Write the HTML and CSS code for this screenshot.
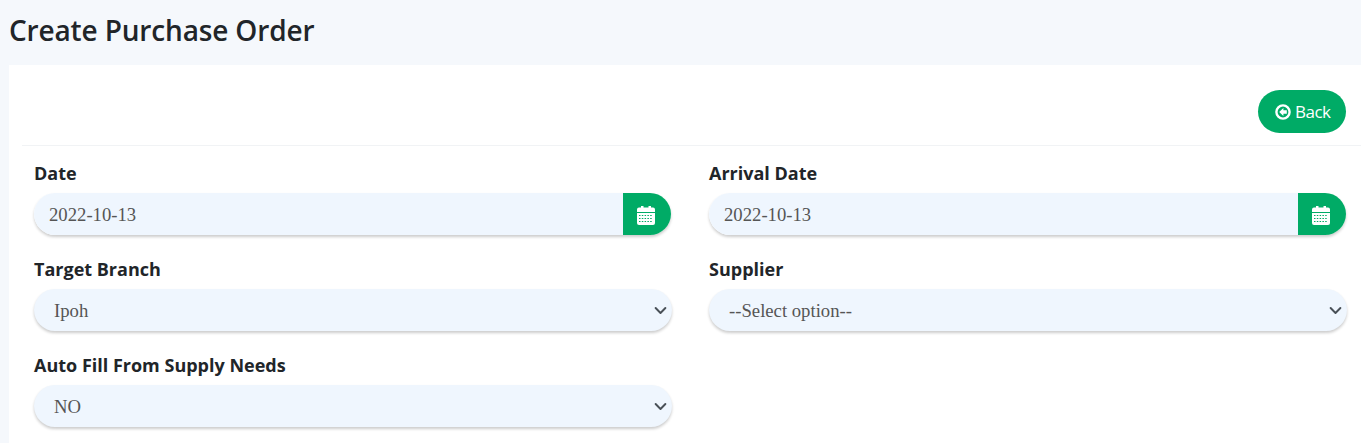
FILE: index.html
```html
<!DOCTYPE html>
<html lang="en">
<head>
    <meta charset="UTF-8">
    <meta name="viewport" content="width=device-width, initial-scale=1.0">
    <title>Create Purchase Order</title>
    <link rel="stylesheet" href="styles.css">
</head>
<body>

    <h1 class="page-title">Create Purchase Order</h1>

    <div class="card">
        <div class="card-header">
            <a href="#" class="btn-back">
                <svg class="back-icon" viewBox="0 0 16 16" width="16" height="16">
                    <circle cx="8" cy="8" r="6.6" fill="none" stroke="#fff" stroke-width="2.4"/>
                    <path d="M8.4 4 4.2 8l4.2 4V9.700h3.400V6.300H8.400z" fill="#fff"/>
                </svg>
                Back
            </a>
        </div>

        <form class="order-form">
            <div class="form-group">
                <label for="date">Date</label>
                <div class="input-group">
                    <input type="text" id="date" value="2022-10-13">
                    <span class="input-addon">
                        <svg viewBox="0 0 18 20" width="18" height="20">
                            <path d="M0 8h18v10a2 2 0 0 1-2 2H2a2 2 0 0 1-2-2z" fill="#fff"/>
                            <path d="M0 7V4.500a2 2 0 0 1 2-2h2V1h2.500v1.500h5V1H14v1.500h2a2 2 0 0 1 2 2V7z" fill="#fff"/>
                            <path d="M2 10.500h14M2 13.500h14M2 16.500h14" stroke="#00ab66" stroke-width="1.200" stroke-dasharray="1.500 1.300"/>
                        </svg>
                    </span>
                </div>
            </div>

            <div class="form-group">
                <label for="arrival">Arrival Date</label>
                <div class="input-group">
                    <input type="text" id="arrival" value="2022-10-13">
                    <span class="input-addon">
                        <svg viewBox="0 0 18 20" width="18" height="20">
                            <path d="M0 8h18v10a2 2 0 0 1-2 2H2a2 2 0 0 1-2-2z" fill="#fff"/>
                            <path d="M0 7V4.500a2 2 0 0 1 2-2h2V1h2.500v1.500h5V1H14v1.500h2a2 2 0 0 1 2 2V7z" fill="#fff"/>
                            <path d="M2 10.500h14M2 13.500h14M2 16.500h14" stroke="#00ab66" stroke-width="1.200" stroke-dasharray="1.500 1.300"/>
                        </svg>
                    </span>
                </div>
            </div>

            <div class="form-group">
                <label for="branch">Target Branch</label>
                <select id="branch">
                    <option>Ipoh</option>
                </select>
            </div>

            <div class="form-group">
                <label for="supplier">Supplier</label>
                <select id="supplier">
                    <option>--Select option--</option>
                </select>
            </div>

            <div class="form-group">
                <label for="autofill">Auto Fill From Supply Needs</label>
                <select id="autofill">
                    <option>NO</option>
                </select>
            </div>
        </form>
    </div>

</body>
</html>
```

FILE: styles.css
```css
/* Global Styles */
* {
    margin: 0;
    padding: 0;
    box-sizing: border-box;
    font-family: 'Open Sans', sans-serif;
}

body {
    background: #f5f8fc;
    color: #212529;
    height: 443px;
    overflow: hidden;
}

/* PAGE TITLE */
.page-title {
    font-size: 28px;
    font-weight: 600;
    line-height: 36px;
    letter-spacing: -0.15px;
    padding: 12px 0 17px 9px;
    color: #212529;
}

/* CARD */
.card {
    background: #fff;
    margin-left: 9px;
    height: 378px;
    padding-left: 13px;
}

.card-header {
    display: flex;
    justify-content: flex-end;
    padding: 25px 15px 12px 0;
    border-bottom: 1px solid #f1f3f5;
}

.btn-back {
    display: flex;
    align-items: center;
    gap: 4px;
    width: 88px;
    height: 43px;
    padding: 0 0 0 17px;
    background: #00ab66;
    color: #fff;
    border-radius: 22px;
    font-size: 17px;
    letter-spacing: -0.5px;
    text-decoration: none;
}

/* FORM */
.order-form {
    display: grid;
    grid-template-columns: 638px 638px;
    column-gap: 37px;
    row-gap: 21px;
    padding: 14px 0 0 12px;
}

.form-group label {
    display: block;
    font-size: 18px;
    font-weight: 700;
    line-height: 27px;
    margin-bottom: 6px;
    color: #212529;
}

.input-group {
    display: flex;
    height: 42px;
    margin-right: 1px;
    border-radius: 21px;
    overflow: hidden;
    box-shadow: 0 2px 3px rgba(0, 0, 0, 0.2);
}

.input-group input,
select {
    font-family: 'Liberation Serif', serif;
    font-size: 18.7px;
    color: #555;
    background-color: #eff6fe;
    border: none;
    outline: none;
}

.input-group input {
    flex: 1;
    min-width: 0;
    padding-left: 15px;
    padding-top: 2px;
}

.input-addon {
    display: flex;
    align-items: center;
    justify-content: center;
    width: 48px;
    padding-right: 2px;
    padding-top: 2px;
    background: #00ab66;
}

select {
    display: block;
    width: 100%;
    height: 42px;
    padding-left: 20px;
    border-radius: 21px;
    box-shadow: 0 2px 3px rgba(0, 0, 0, 0.2);
    appearance: none;
    background-image: url("data:image/svg+xml,%3csvg xmlns='http://www.w3.org/2000/svg' viewBox='0 0 16 16'%3e%3cpath fill='none' stroke='%23495057' stroke-linecap='round' stroke-linejoin='round' stroke-width='2.4' d='M2 5l6 6 6-6'/%3e%3c/svg%3e");
    background-repeat: no-repeat;
    background-position: right 5px center;
    background-size: 13px;
}
```
